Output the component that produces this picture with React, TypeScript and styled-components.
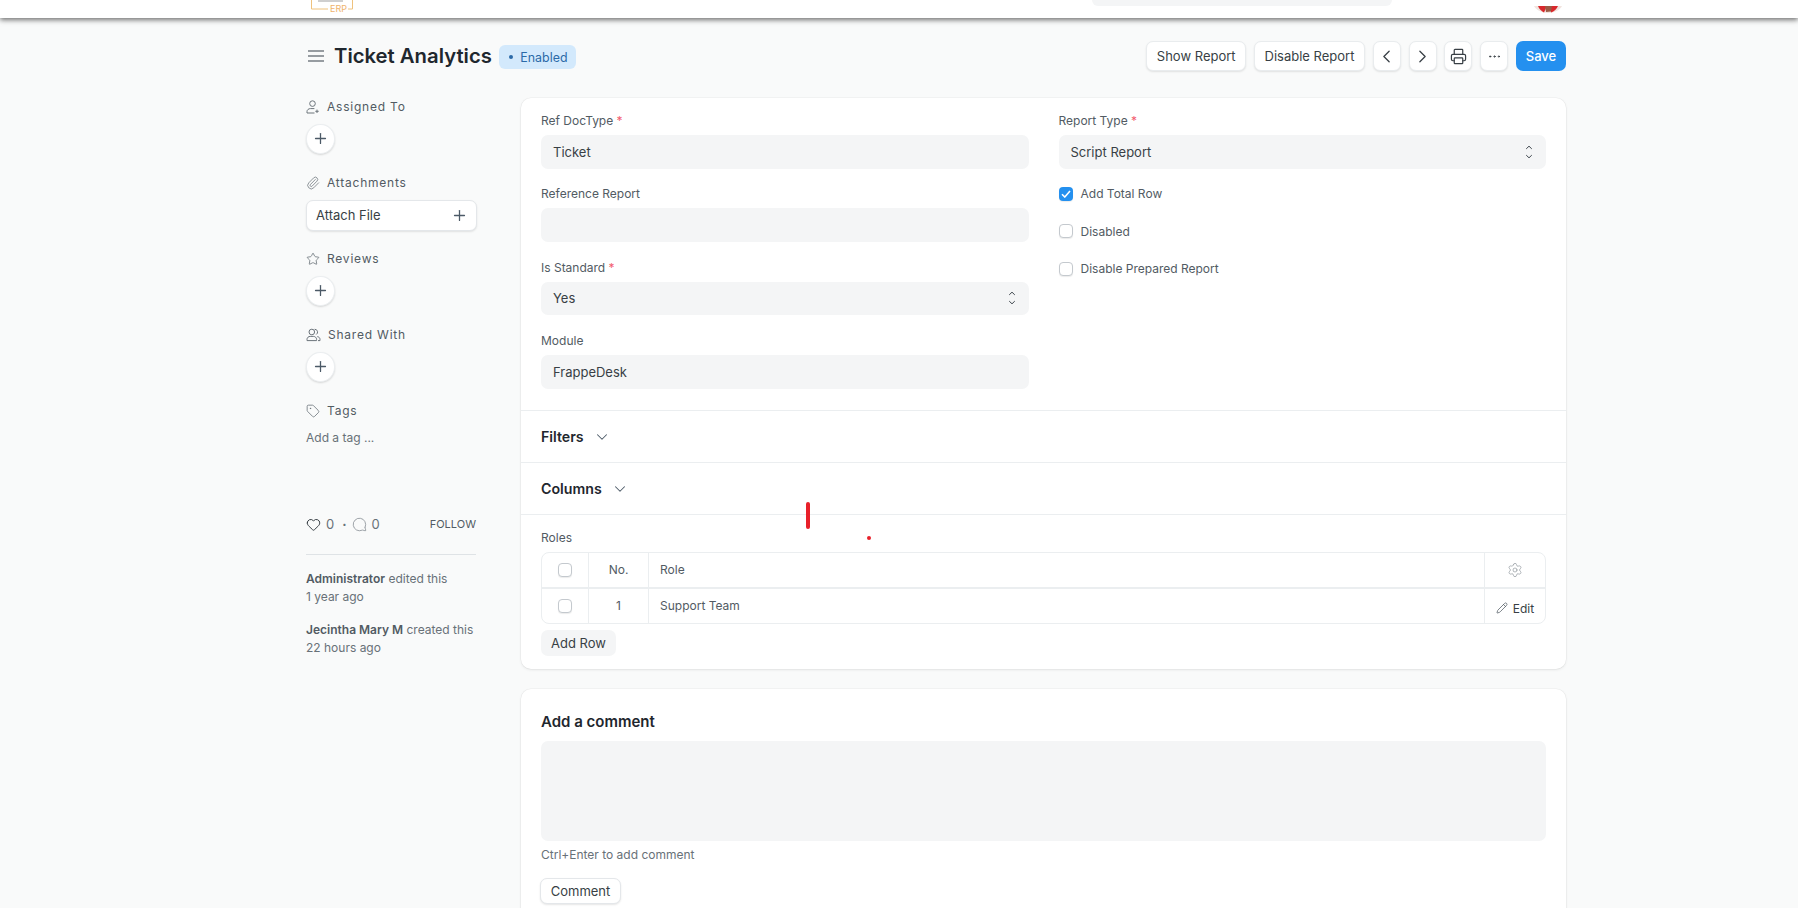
import styled, { createGlobalStyle } from "styled-components";
import {
  ChevronDown,
  ChevronLeft,
  ChevronRight,
  Ellipsis,
  Heart,
  MessageCircle,
  Paperclip,
  Pencil,
  Plus,
  Printer,
  Settings,
  Star,
  Tag,
} from "lucide-react";

const colors = {
  page: "#f9fafa",
  text: "#1f272e",
  soft: "#383f45",
  label: "#525b63",
  muted: "#687178",
  control: "#f4f5f6",
  border: "#ebeef0",
  blue: "#2490ef",
};

const GlobalStyle = createGlobalStyle`
  html, body {
    margin: 0;
    height: 100%;
    overflow: hidden;
    background: ${colors.page};
  }
  body {
    font-family: Inter, "Liberation Sans", sans-serif;
    color: ${colors.text};
    font-size: 13px;
  }
  * { box-sizing: border-box; }
`;

function UserAddIcon() {
  return (
    <svg width="14" height="14" viewBox="0 0 14 14" fill="none" stroke="currentColor" strokeWidth="1">
      <circle cx="6.5" cy="3.6" r="2.8" />
      <path d="M1 13v-1.4C1 9.8 2.6 8.6 4.4 8.6h4" />
      <path d="M1 13h7.5M11 9.6v3.4M9.3 11.3h3.4" />
    </svg>
  );
}

function SharedIcon() {
  return (
    <svg width="15" height="14" viewBox="0 0 15 14" fill="none" stroke="currentColor" strokeWidth="1">
      <circle cx="5.8" cy="4" r="2.8" />
      <path d="M1 12.6v-1.2c0-1.8 1.5-3 3.2-3h3.2c1.7 0 3.2 1.2 3.2 3v1.2z" />
      <path d="M8.6 1.3a2.8 2.8 0 0 1 1.6 5.2M11.3 8.6c1.6.2 2.7 1.3 2.7 2.9v1.1h-2" />
    </svg>
  );
}

function SelectArrows() {
  return (
    <svg width="10" height="14" viewBox="0 0 10 14" fill="none" stroke="#3f474e" strokeWidth="1" strokeLinecap="round">
      <path d="M2.5 3.6 5 1.2l2.5 2.4M2.5 10.4 5 12.8l2.5-2.4" />
    </svg>
  );
}

function Logo() {
  return (
    <svg width="44" height="13" viewBox="0 0 44 13" fill="none">
      <path d="M.5 0v9H17M37 9h4.5V0" stroke="#efc27d" strokeWidth="1" />
      <rect x="7" y="0" width="25" height="2" fill="#cfcfcf" />
      <text x="19" y="12" fontSize="9" fill="#efb36c" fontFamily="Inter, sans-serif">
        ERP
      </text>
    </svg>
  );
}

function Avatar() {
  return (
    <svg width="28" height="7" viewBox="0 0 28 7">
      <path d="M0 0h28c-2 4-8 7-14 7S2 4 0 0z" fill="#f1e4df" />
      <path d="M4 0h9l-3 6.4C8 5.6 5 3 4 0z" fill="#d8282c" />
      <path d="M16 0h8c-1 3-4 5.4-7 6.4z" fill="#d8282c" />
      <path d="M11 0h7l-1 5.5-5 .5z" fill="#9a5a44" />
    </svg>
  );
}

function SideAdd() {
  return (
    <RoundAdd>
      <Plus size={17} strokeWidth={1.8} />
    </RoundAdd>
  );
}

function Field({ label, required, children }: { label: string; required?: boolean; children: React.ReactNode }) {
  return (
    <div>
      <FieldLabel>
        {label}
        {required && <Req> *</Req>}
      </FieldLabel>
      {children}
    </div>
  );
}

export default function App() {
  return (
    <>
      <GlobalStyle />
      <Navbar>
        <LogoSlot>
          <Logo />
        </LogoSlot>
        <SearchBar />
        <AvatarSlot>
          <Avatar />
        </AvatarSlot>
      </Navbar>
      <Page>
        <PageHead>
          <TitleGroup>
            <MenuIcon>
              <span />
              <span />
              <span />
            </MenuIcon>
            <Title>Ticket Analytics</Title>
            <Badge>Enabled</Badge>
          </TitleGroup>
          <Actions>
            <HeadButton $w={100}>Show Report</HeadButton>
            <HeadButton $w={111}>Disable Report</HeadButton>
            <HeadButton $w={28}>
              <ChevronLeft size={21} strokeWidth={1.5} />
            </HeadButton>
            <HeadButton $w={28}>
              <ChevronRight size={21} strokeWidth={1.5} />
            </HeadButton>
            <HeadButton $w={28}>
              <Printer size={17} strokeWidth={1.7} />
            </HeadButton>
            <HeadButton $w={28}>
              <Ellipsis size={15} strokeWidth={1.6} />
            </HeadButton>
            <SaveButton>Save</SaveButton>
          </Actions>
        </PageHead>
        <Layout>
          <Sidebar>
            <SideSection>
              <SideLabel>
                <UserAddIcon />
                Assigned To
              </SideLabel>
              <SideAdd />
            </SideSection>
            <SideSection>
              <SideLabel>
                <Paperclip size={14} strokeWidth={1.3} />
                Attachments
              </SideLabel>
              <AttachButton>
                Attach File
                <Plus size={17} strokeWidth={1.8} />
              </AttachButton>
            </SideSection>
            <SideSection>
              <SideLabel>
                <Star size={14} strokeWidth={1.4} />
                Reviews
              </SideLabel>
              <SideAdd />
            </SideSection>
            <SideSection>
              <SideLabel>
                <SharedIcon />
                Shared With
              </SideLabel>
              <SideAdd />
            </SideSection>
            <SideLabel>
              <Tag size={14} strokeWidth={1.4} />
              Tags
            </SideLabel>
            <AddTag>Add a tag ...</AddTag>
            <StatsRow>
              <Stat>
                <Heart size={15} strokeWidth={1.4} color="#1f272e" />0
              </Stat>
              <StatDot>·</StatDot>
              <Stat>
                <Bubble size={15} strokeWidth={1} />0
              </Stat>
              <Follow>FOLLOW</Follow>
            </StatsRow>
            <SideRule />
            <Activity>
              <b>Administrator</b> edited this
              <br />1 year ago
            </Activity>
            <Activity>
              <b>Jecintha Mary M</b> created this
              <br />
              22 hours ago
            </Activity>
          </Sidebar>
          <MainColumn>
            <Card>
              <FormGrid>
                <FormColumn>
                  <Field label="Ref DocType" required>
                    <Control>Ticket</Control>
                  </Field>
                  <Field label="Reference Report">
                    <Control />
                  </Field>
                  <Field label="Is Standard" required>
                    <Control>
                      Yes
                      <SelectArrows />
                    </Control>
                  </Field>
                  <Field label="Module">
                    <Control>FrappeDesk</Control>
                  </Field>
                </FormColumn>
                <div>
                  <Field label="Report Type" required>
                    <Control>
                      Script Report
                      <SelectArrows />
                    </Control>
                  </Field>
                  <CheckList>
                    <CheckRow>
                      <CheckBox $checked>
                        <svg width="10" height="8" viewBox="0 0 10 8" fill="none" stroke="#fff" strokeWidth="1.6">
                          <path d="M1 4.2 3.8 7 9 1" />
                        </svg>
                      </CheckBox>
                      Add Total Row
                    </CheckRow>
                    <CheckRow>
                      <CheckBox />
                      Disabled
                    </CheckRow>
                    <CheckRow>
                      <CheckBox />
                      Disable Prepared Report
                    </CheckRow>
                  </CheckList>
                </div>
              </FormGrid>
              <Collapsed>
                Filters
                <ChevronDown size={18} strokeWidth={1.4} />
              </Collapsed>
              <Collapsed>
                Columns
                <ChevronDown size={18} strokeWidth={1.4} />
              </Collapsed>
              <RolesSection>
                <RedStroke />
                <RedDot />
                <FieldLabel>Roles</FieldLabel>
                <Table>
                  <TableRow $head>
                    <CheckCell>
                      <CheckBox />
                    </CheckCell>
                    <NoCell>No.</NoCell>
                    <RoleCell>Role</RoleCell>
                    <EndCell>
                      <Settings size={16} strokeWidth={1} />
                    </EndCell>
                  </TableRow>
                  <TableRow>
                    <CheckCell>
                      <CheckBox />
                    </CheckCell>
                    <NoCell>1</NoCell>
                    <RoleCell>Support Team</RoleCell>
                    <EditCell>
                      <Pencil size={12} strokeWidth={1.5} />
                      Edit
                    </EditCell>
                  </TableRow>
                </Table>
                <AddRow>Add Row</AddRow>
              </RolesSection>
            </Card>
            <CommentCard>
              <CommentTitle>Add a comment</CommentTitle>
              <CommentBox />
              <Hint>Ctrl+Enter to add comment</Hint>
              <CommentButton>Comment</CommentButton>
            </CommentCard>
          </MainColumn>
        </Layout>
      </Page>
    </>
  );
}

const Navbar = styled.header`
  display: flex;
  align-items: flex-start;
  height: 18px;
  padding-left: 311px;
  background: #fff;
  box-shadow: 0 2px 5px rgba(0, 0, 0, 0.55);
`;

const LogoSlot = styled.div`
  width: 42px;
  height: 13px;
`;

const SearchBar = styled.div`
  width: 300px;
  height: 6px;
  margin-left: 739px;
  background: ${colors.control};
  border-radius: 0 0 8px 8px;
`;

const AvatarSlot = styled.div`
  width: 28px;
  height: 7px;
  margin-left: 142px;
`;

const Page = styled.main`
  width: 1260px;
  margin-left: 306px;
`;

const PageHead = styled.div`
  display: flex;
  align-items: center;
  justify-content: space-between;
  height: 30px;
  margin-top: 23px;
`;

const TitleGroup = styled.div`
  display: flex;
  align-items: center;
`;

const MenuIcon = styled.div`
  display: flex;
  flex-direction: column;
  gap: 3px;
  width: 16px;
  margin: 0 10px 0 2px;

  span {
    display: block;
    height: 2px;
    background: #979ca1;
  }
`;

const Title = styled.h1`
  margin: 0;
  font-size: 20.3px;
  line-height: 28px;
  font-weight: 600;
  letter-spacing: 0;
  color: ${colors.text};
`;

const Badge = styled.span`
  display: flex;
  align-items: center;
  gap: 6px;
  height: 24px;
  margin: 2px 0 0 7.5px;
  padding: 0 9px 0 10px;
  border-radius: 6px;
  background: #d3e9fc;
  color: #2b6aa8;
  font-size: 12.4px;

  &::before {
    content: "";
    width: 4px;
    height: 4px;
    margin-right: 1px;
    border-radius: 50%;
    background: #2b6aa8;
  }
`;

const Actions = styled.div`
  display: flex;
  gap: 7.8px;
`;

const HeadButton = styled.button<{ $w: number }>`
  display: flex;
  align-items: center;
  justify-content: center;
  width: ${(p) => p.$w}px;
  height: 30px;
  padding: 0;
  border: 1px solid #e9ecee;
  border-radius: 7px;
  background: #fff;
  box-shadow: 0 1px 2px rgba(0, 0, 0, 0.1);
  color: ${colors.soft};
  font-family: inherit;
  font-size: 13px;
`;

const SaveButton = styled.button`
  width: 50px;
  height: 30px;
  padding: 0;
  border: 0;
  border-radius: 7px;
  background: ${colors.blue};
  color: #fff;
  font-family: inherit;
  font-size: 13px;
  font-weight: 500;
`;

const Layout = styled.div`
  display: flex;
  gap: 45px;
  margin-top: 27px;
`;

const Sidebar = styled.aside`
  width: 170px;
  padding-top: 0.5px;
`;

const SideSection = styled.section`
  height: 76px;
`;

const SideLabel = styled.div`
  display: flex;
  align-items: center;
  gap: 7px;
  height: 16px;
  margin-bottom: 9px;
  color: ${colors.label};
  font-size: 12px;
  font-weight: 400;
  letter-spacing: 0.065em;

  svg {
    flex: none;
    color: #6c747b;
  }
`;

const RoundAdd = styled.button`
  display: flex;
  align-items: center;
  justify-content: center;
  width: 29px;
  height: 30.5px;
  padding: 0;
  border: 1px solid #ebeef0;
  border-radius: 50%;
  background: #fff;
  box-shadow: 0 1px 2px rgba(0, 0, 0, 0.14);
  color: #4c5a67;
`;

const AttachButton = styled.button`
  display: flex;
  align-items: center;
  justify-content: space-between;
  width: 171px;
  height: 31px;
  padding: 0 8.5px 0 9px;
  border: 1px solid #e4e7ea;
  border-radius: 7px;
  background: #fff;
  box-shadow: 0 1px 2px rgba(0, 0, 0, 0.1);
  color: ${colors.soft};
  font-family: inherit;
  font-size: 13px;

  svg {
    color: #4c5a67;
  }
`;

const AddTag = styled.div`
  margin-top: 11.5px;
  line-height: 16px;
  color: ${colors.muted};
  font-size: 12px;
`;

const StatsRow = styled.div`
  display: flex;
  align-items: center;
  height: 16px;
  margin-top: 70px;
  color: ${colors.muted};
  font-size: 13px;
`;

const Stat = styled.span`
  display: flex;
  align-items: center;
  gap: 5px;
`;

const Bubble = styled(MessageCircle)`
  transform: scaleX(-1);
`;

const StatDot = styled.span`
  margin: 0 5px 0 8px;
  font-weight: 700;
`;

const Follow = styled.span`
  margin-left: auto;
  font-size: 11px;
  color: ${colors.label};
`;

const SideRule = styled.hr`
  height: 1px;
  margin: 22px 0 15px;
  border: 0;
  background: #dfe3e6;
`;

const Activity = styled.p`
  margin: 0 0 15px;
  font-size: 12px;
  line-height: 18px;
  color: ${colors.muted};
  white-space: nowrap;

  b {
    font-weight: 600;
    color: ${colors.label};
  }
`;

const MainColumn = styled.div`
  display: flex;
  flex-direction: column;
  gap: 20px;
  width: 1045px;
`;

const Card = styled.section`
  background: #fff;
  border-radius: 10px;
  box-shadow: 0 0 0 0.5px rgba(0, 0, 0, 0.05), 0 1px 3px rgba(0, 0, 0, 0.08);
`;

const FormGrid = styled.div`
  display: grid;
  grid-template-columns: 1fr 1fr;
  gap: 30px;
  height: 312px;
  padding: 15px 20px 0;
`;

const FormColumn = styled.div`
  display: flex;
  flex-direction: column;
  gap: 17.67px;
`;

const FieldLabel = styled.div`
  height: 16px;
  margin-bottom: 6px;
  line-height: 16px;
  color: ${colors.label};
  font-size: 12px;
`;

const Req = styled.span`
  color: #f25c6e;
`;

const Control = styled.div`
  display: flex;
  align-items: center;
  justify-content: space-between;
  height: 33.67px;
  padding: 0 12px;
  border-radius: 7px;
  background: ${colors.control};
  color: ${colors.soft};
  font-size: 13px;
`;

const CheckList = styled.div`
  display: flex;
  flex-direction: column;
  gap: 21.5px;
  margin-top: 17px;
`;

const CheckRow = styled.label`
  display: flex;
  align-items: center;
  gap: 8px;
  height: 16px;
  color: ${colors.label};
  font-size: 12px;
`;

const CheckBox = styled.span<{ $checked?: boolean }>`
  display: flex;
  align-items: center;
  justify-content: center;
  flex: none;
  width: 14px;
  height: 14px;
  border: ${(p) => (p.$checked ? "0" : "1px solid #c4c9ce")};
  border-radius: 4px;
  background: ${(p) => (p.$checked ? colors.blue : "#fff")};
  box-shadow: 0 1px 1px rgba(0, 0, 0, 0.08);
`;

const Collapsed = styled.div`
  display: flex;
  align-items: center;
  gap: 9px;
  height: 52px;
  padding: 0 20px;
  border-top: 1px solid ${colors.border};
  color: ${colors.text};
  font-size: 14.2px;
  font-weight: 600;

  svg {
    color: #4c5a67;
  }
`;

const RolesSection = styled.div`
  position: relative;
  padding: 15px 20px 13px;
  border-top: 1px solid ${colors.border};
`;

const RedStroke = styled.span`
  position: absolute;
  left: 285px;
  top: -13px;
  width: 4px;
  height: 27px;
  border-radius: 2px;
  background: #e8202a;
`;

const RedDot = styled.span`
  position: absolute;
  left: 346px;
  top: 20.5px;
  width: 4px;
  height: 4px;
  border-radius: 50%;
  background: #e8202a;
`;

const Table = styled.div`
  border: 1px solid ${colors.border};
  border-radius: 8px;
`;

const TableRow = styled.div<{ $head?: boolean }>`
  display: flex;
  height: ${(p) => (p.$head ? "36px" : "34px")};
  border-bottom: ${(p) => (p.$head ? `2px solid ${colors.border}` : "0")};
  color: ${(p) => (p.$head ? colors.label : colors.soft)};
  font-size: 12px;
`;

const CheckCell = styled.div`
  display: flex;
  align-items: center;
  justify-content: center;
  width: 47px;
  border-right: 1px solid ${colors.border};
`;

const NoCell = styled.div`
  display: flex;
  align-items: center;
  justify-content: center;
  width: 60px;
  padding-bottom: 1px;
  border-right: 1px solid ${colors.border};
  color: ${colors.label};
`;

const RoleCell = styled.div`
  display: flex;
  align-items: center;
  flex: 1;
  padding: 0 0 1px 11px;
  border-right: 1px solid ${colors.border};
  color: ${colors.label};
`;

const EndCell = styled.div`
  display: flex;
  align-items: center;
  justify-content: center;
  width: 60px;
  color: #8d949a;
`;

const EditCell = styled(EndCell)`
  gap: 5px;
  padding-top: 4px;
  color: ${colors.soft};
  font-size: 12px;

  svg {
    color: #525b63;
  }
`;

const AddRow = styled.button`
  display: block;
  width: 75px;
  height: 26px;
  margin-top: 6px;
  padding: 0;
  border: 0;
  border-radius: 7px;
  background: ${colors.control};
  color: ${colors.soft};
  font-family: inherit;
  font-size: 13px;
`;

const CommentCard = styled(Card)`
  padding: 23px 20px 20px;
`;

const CommentTitle = styled.h2`
  margin: 0 0 9px;
  font-size: 15px;
  line-height: 20px;
  font-weight: 600;
  color: ${colors.text};
`;

const CommentBox = styled.div`
  height: 100px;
  border-radius: 7px;
  background: ${colors.control};
`;

const Hint = styled.div`
  margin-top: 6px;
  line-height: 16px;
  color: ${colors.muted};
  font-size: 12px;
`;

const CommentButton = styled.button`
  display: block;
  width: 81px;
  height: 26px;
  margin: 15px 0 0 -1px;
  padding: 0;
  border: 1px solid #e4e7ea;
  border-radius: 7px;
  background: #fff;
  box-shadow: 0 1px 2px rgba(0, 0, 0, 0.1);
  color: ${colors.soft};
  font-family: inherit;
  font-size: 13px;
`;
